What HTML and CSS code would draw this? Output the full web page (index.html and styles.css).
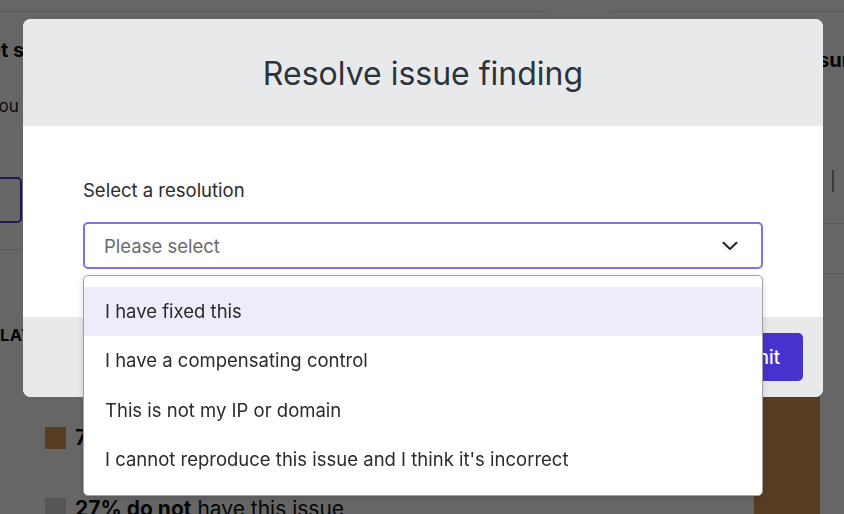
FILE: index.html
```html
<!DOCTYPE html>
<html lang="en">
<head>
<meta charset="utf-8">
<title>Resolve issue finding</title>
<link rel="stylesheet" href="styles.css">
</head>
<body>
<div class="page">
  <div class="top-row">
    <section class="card card-score">
      <h2 class="card-title">Your asset score</h2>
      <p class="card-text">Once more you resolve issues your score updates.</p>
      <button class="outline-btn" type="button">View</button>
    </section>
    <section class="card card-summary">
      <h2 class="card-title summary-title">Your open issues summary</h2>
      <div class="toolbar"><span class="tool-sep"></span></div>
      <div class="card-divider"></div>
    </section>
  </div>
  <section class="lower">
    <div class="lower-left">
      <h3 class="section-label">LATEST SCAN</h3>
      <ul class="legend">
        <li><span class="swatch swatch-brown"></span><span><b>73% have</b> this issue</span></li>
        <li><span class="swatch swatch-grey"></span><span><b>27% do not</b> have this issue</span></li>
      </ul>
    </div>
    <div class="chart">
      <div class="bar bar-grey" style="height:110px"></div>
      <div class="bar bar-brown" style="height:270px"></div>
    </div>
  </section>
</div>

<div class="overlay">
  <div class="modal" role="dialog" aria-labelledby="modal-title">
    <header class="modal-header">
      <h1 class="modal-title" id="modal-title">Resolve issue finding</h1>
    </header>
    <div class="modal-body">
      <label class="field-label">Select a resolution</label>
      <div class="select-wrap">
        <div class="select">
          <span class="select-placeholder">Please select</span>
          <svg class="chevron" width="16" height="10" viewBox="0 0 16 10" aria-hidden="true">
            <path d="M1.5 1.8 L8 8 L14.5 1.8" fill="none" stroke="#2b2b2b" stroke-width="2.2" stroke-linecap="round" stroke-linejoin="round"/>
          </svg>
        </div>
        <ul class="dropdown">
          <li class="option option-active">I have fixed this</li>
          <li class="option">I have a compensating control</li>
          <li class="option">This is not my IP or domain</li>
          <li class="option">I cannot reproduce this issue and I think it's incorrect</li>
        </ul>
      </div>
    </div>
    <footer class="modal-footer">
      <button class="submit-btn" type="button">Submit</button>
    </footer>
  </div>
</div>
</body>
</html>
```

FILE: styles.css
```css
* { box-sizing: border-box; }

html, body {
  margin: 0;
  height: 514px;
  overflow: hidden;
  background: #ffffff;
  font-family: Inter, "Noto Sans", "Liberation Sans", sans-serif;
  color: #111111;
}

/* ---------- background page ---------- */
.page {
  width: 844px;
}

.top-row {
  display: flex;
  gap: 58px;
  padding-top: 11px;
  margin: 0 -80px 0 -120px;
  align-items: flex-start;
}

.card {
  background: #ffffff;
  border: 1px solid #e1e1e1;
  border-radius: 6px;
}

.card-score {
  flex: none;
  width: 669px;
  height: 239px;
  padding: 24px 24px 0;
}

.card-summary {
  flex: 1;
  min-width: 0;
  height: 263px;
  padding: 34px 0 0 38px;
  display: flex;
  flex-direction: column;
}

.card-title {
  margin: 0;
  font-size: 20px;
  line-height: 28px;
  font-weight: 700;
  color: #111111;
  white-space: nowrap;
}

.card-text {
  margin: 30px 0 0;
  font-size: 17px;
  line-height: 24px;
  color: #222222;
  white-space: nowrap;
  text-indent: -9px;
}

.outline-btn {
  display: block;
  margin-top: 59px;
  width: 117px;
  height: 46px;
  border: 2px solid #553ae1;
  border-radius: 5px;
  background: #ffffff;
  font: 600 16px Inter, sans-serif;
  color: #553ae1;
}

.toolbar {
  display: flex;
  justify-content: flex-end;
  padding-right: 89px;
  margin-top: 96px;
}

.tool-sep {
  width: 2px;
  height: 22px;
  background: #919191;
}

.card-divider {
  height: 1px;
  background: #e1e1e1;
  margin-top: 31px;
}

.lower {
  display: flex;
  justify-content: space-between;
  padding: 51px 24px 0 0;
}

.section-label {
  margin: 0;
  font-size: 16.5px;
  line-height: 20px;
  font-weight: 700;
  letter-spacing: 0.5px;
  color: #111111;
}

.legend {
  list-style: none;
  margin: 82px 0 0;
  padding: 0 0 0 45px;
  display: flex;
  flex-direction: column;
  gap: 49px;
}

.legend li {
  display: flex;
  align-items: center;
  gap: 9px;
  height: 22px;
  font-size: 21px;
  line-height: 22px;
  white-space: nowrap;
  color: #111111;
}

.swatch {
  width: 21px;
  height: 22px;
  flex: none;
}
.swatch-brown { background: #d99855; }
.swatch-grey { background: #d4d4d4; }

.chart {
  display: flex;
  align-items: flex-end;
  gap: 47px;
  height: 300px;
  margin-top: 25px;
}

.bar { width: 66px; }
.bar-grey { background: #c0c0c0; }
.bar-brown { background: #d99855; }

/* ---------- modal ---------- */
.overlay {
  position: fixed;
  inset: 0;
  background: rgba(0, 0, 0, 0.6);
  display: flex;
  justify-content: center;
  align-items: flex-start;
  padding-top: 19px;
}

.modal {
  width: 800px;
  margin-left: 2px;
  border-radius: 8px;
  background: #ffffff;
}

.modal-header {
  height: 107px;
  background: #e8e9eb;
  border-radius: 8px 8px 0 0;
  display: flex;
  align-items: center;
  justify-content: center;
}

.modal-title {
  margin: 0;
  font-size: 32px;
  line-height: 40px;
  font-weight: 400;
  color: #2d333a;
  padding-top: 2px;
}

.modal-body {
  padding: 52px 60px 48px;
}

.field-label {
  display: block;
  font-size: 18.5px;
  line-height: 24px;
  color: #2b2b2b;
}

.select-wrap {
  position: relative;
  margin-top: 20px;
}

.select {
  height: 47px;
  border: 2px solid #8170ee;
  border-radius: 5px;
  display: flex;
  align-items: center;
  justify-content: space-between;
  padding: 0 23px 0 19px;
  background: #ffffff;
}

.select-placeholder {
  font-size: 18.5px;
  color: #6b6b6b;
}

.chevron { display: block; }

.dropdown {
  position: absolute;
  left: 0;
  right: 0;
  top: calc(100% + 6px);
  margin: 0;
  padding: 10.5px 0 11px;
  list-style: none;
  background: #ffffff;
  border: 1px solid #a3a3a3;
  border-radius: 5px;
  box-shadow: 0 2px 6px rgba(0, 0, 0, 0.15);
  z-index: 2;
}

.option {
  height: 49.3px;
  display: flex;
  align-items: center;
  padding: 0 21px;
  font-size: 18.5px;
  color: #2b2b2b;
  white-space: nowrap;
}

.option-active { background: #eeebfb; }

.modal-footer {
  height: 80px;
  background: #e8e9eb;
  border-radius: 0 0 8px 8px;
  display: flex;
  align-items: center;
  justify-content: flex-end;
  padding: 0 20px;
}

.submit-btn {
  height: 48px;
  padding: 0 23px;
  border: none;
  border-radius: 5px;
  background: #4632cd;
  color: #ffffff;
  font: 500 18.5px Inter, sans-serif;
}
```
